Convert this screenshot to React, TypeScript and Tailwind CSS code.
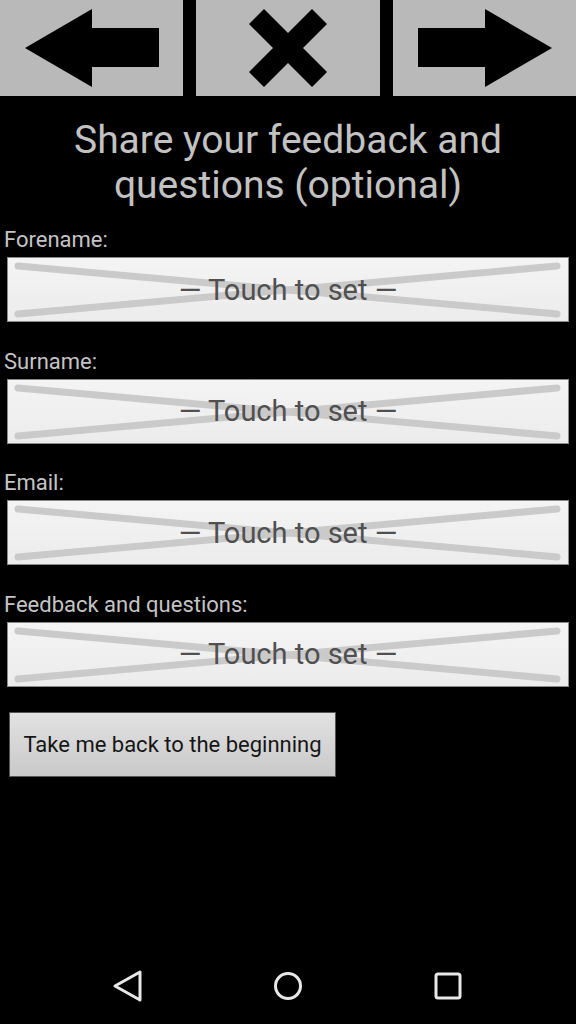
import React from 'react';

// Feedback form screen (Android-style)

const fields = ['Forename:', 'Surname:', 'Email:', 'Feedback and questions:'];

function TopButton({ children }: { children: React.ReactNode }) {
  return (
    <button className="flex items-center justify-center bg-[#b9b9b9] h-[96px]">
      <svg width="183" height="96" viewBox="0 0 183 96">
        {children}
      </svg>
    </button>
  );
}

function TouchField({ label }: { label: string }) {
  return (
    <div className="flex flex-col">
      <div className="pl-[4px] text-[22px] leading-[24px] text-[#c4c4c4]">{label}</div>
      <div className="relative mx-[7px] mt-[5px] h-[65px] border border-[#8a8a8a] bg-gradient-to-b from-[#f4f4f4] to-[#ececec] flex items-center justify-center">
        <svg
          className="absolute inset-0 pointer-events-none"
          width="100%"
          height="100%"
          viewBox="0 0 560 63"
          preserveAspectRatio="none"
        >
          <line x1="10" y1="8" x2="549" y2="56" stroke="#cacaca" strokeWidth="7" strokeLinecap="round" />
          <line x1="10" y1="56" x2="549" y2="8" stroke="#cacaca" strokeWidth="7" strokeLinecap="round" />
        </svg>
        <span className="relative text-[29px] leading-[34px] text-[#505050]">— Touch to set —</span>
      </div>
    </div>
  );
}

export default function App() {
  return (
    <div className="h-[1024px] w-[576px] bg-black flex flex-col" style={{ fontFamily: 'Roboto, "Noto Sans", sans-serif' }}>
      {/* Top navigation buttons */}
      <div className="grid grid-cols-3 gap-[13px]">
        <TopButton>
          <polygon points="25,48 92,9 92,28 159,28 159,67 92,67 92,87" fill="#000" />
        </TopButton>
        <TopButton>
          <polygon
            points="68,9 92,33 116,9 131,24 107,48 131,72 116,87 92,63 68,87 53,72 77,48 53,24"
            fill="#000"
          />
        </TopButton>
        <TopButton>
          <polygon points="159,48 92,9 92,28 25,28 25,67 92,67 92,87" fill="#000" />
        </TopButton>
      </div>

      <div className="flex-1 flex flex-col">
        <h1 className="pt-[22px] text-center text-[39px] leading-[45px] text-[#c2c2c2] font-normal">
          Share your feedback and
          <br />
          questions (optional)
        </h1>

        <div className="mt-[20px] flex flex-col gap-[27.5px]">
          {fields.map((f) => (
            <TouchField key={f} label={f} />
          ))}
        </div>

        <div className="mt-[25px] pl-[9px]">
          <button className="h-[65px] w-[327px] border border-[#555] bg-gradient-to-b from-[#e2e2e2] to-[#c9c9c9] text-[22px] text-[#161616]">
            Take me back to the beginning
          </button>
        </div>
      </div>

      {/* System navigation bar */}
      <div className="h-[76px] grid grid-cols-3 justify-items-center items-center px-[48px]">
        <svg width="40" height="40" viewBox="0 0 40 40">
          <polygon points="7,20 32,6 32,34" fill="none" stroke="#e8e8e8" strokeWidth="3" strokeLinejoin="round" />
        </svg>
        <svg width="40" height="40" viewBox="0 0 40 40">
          <circle cx="20" cy="20" r="12.5" fill="none" stroke="#e8e8e8" strokeWidth="3" />
        </svg>
        <svg width="40" height="40" viewBox="0 0 40 40">
          <rect x="8" y="8" width="24" height="24" rx="2" fill="none" stroke="#e8e8e8" strokeWidth="3" />
        </svg>
      </div>
    </div>
  );
}
